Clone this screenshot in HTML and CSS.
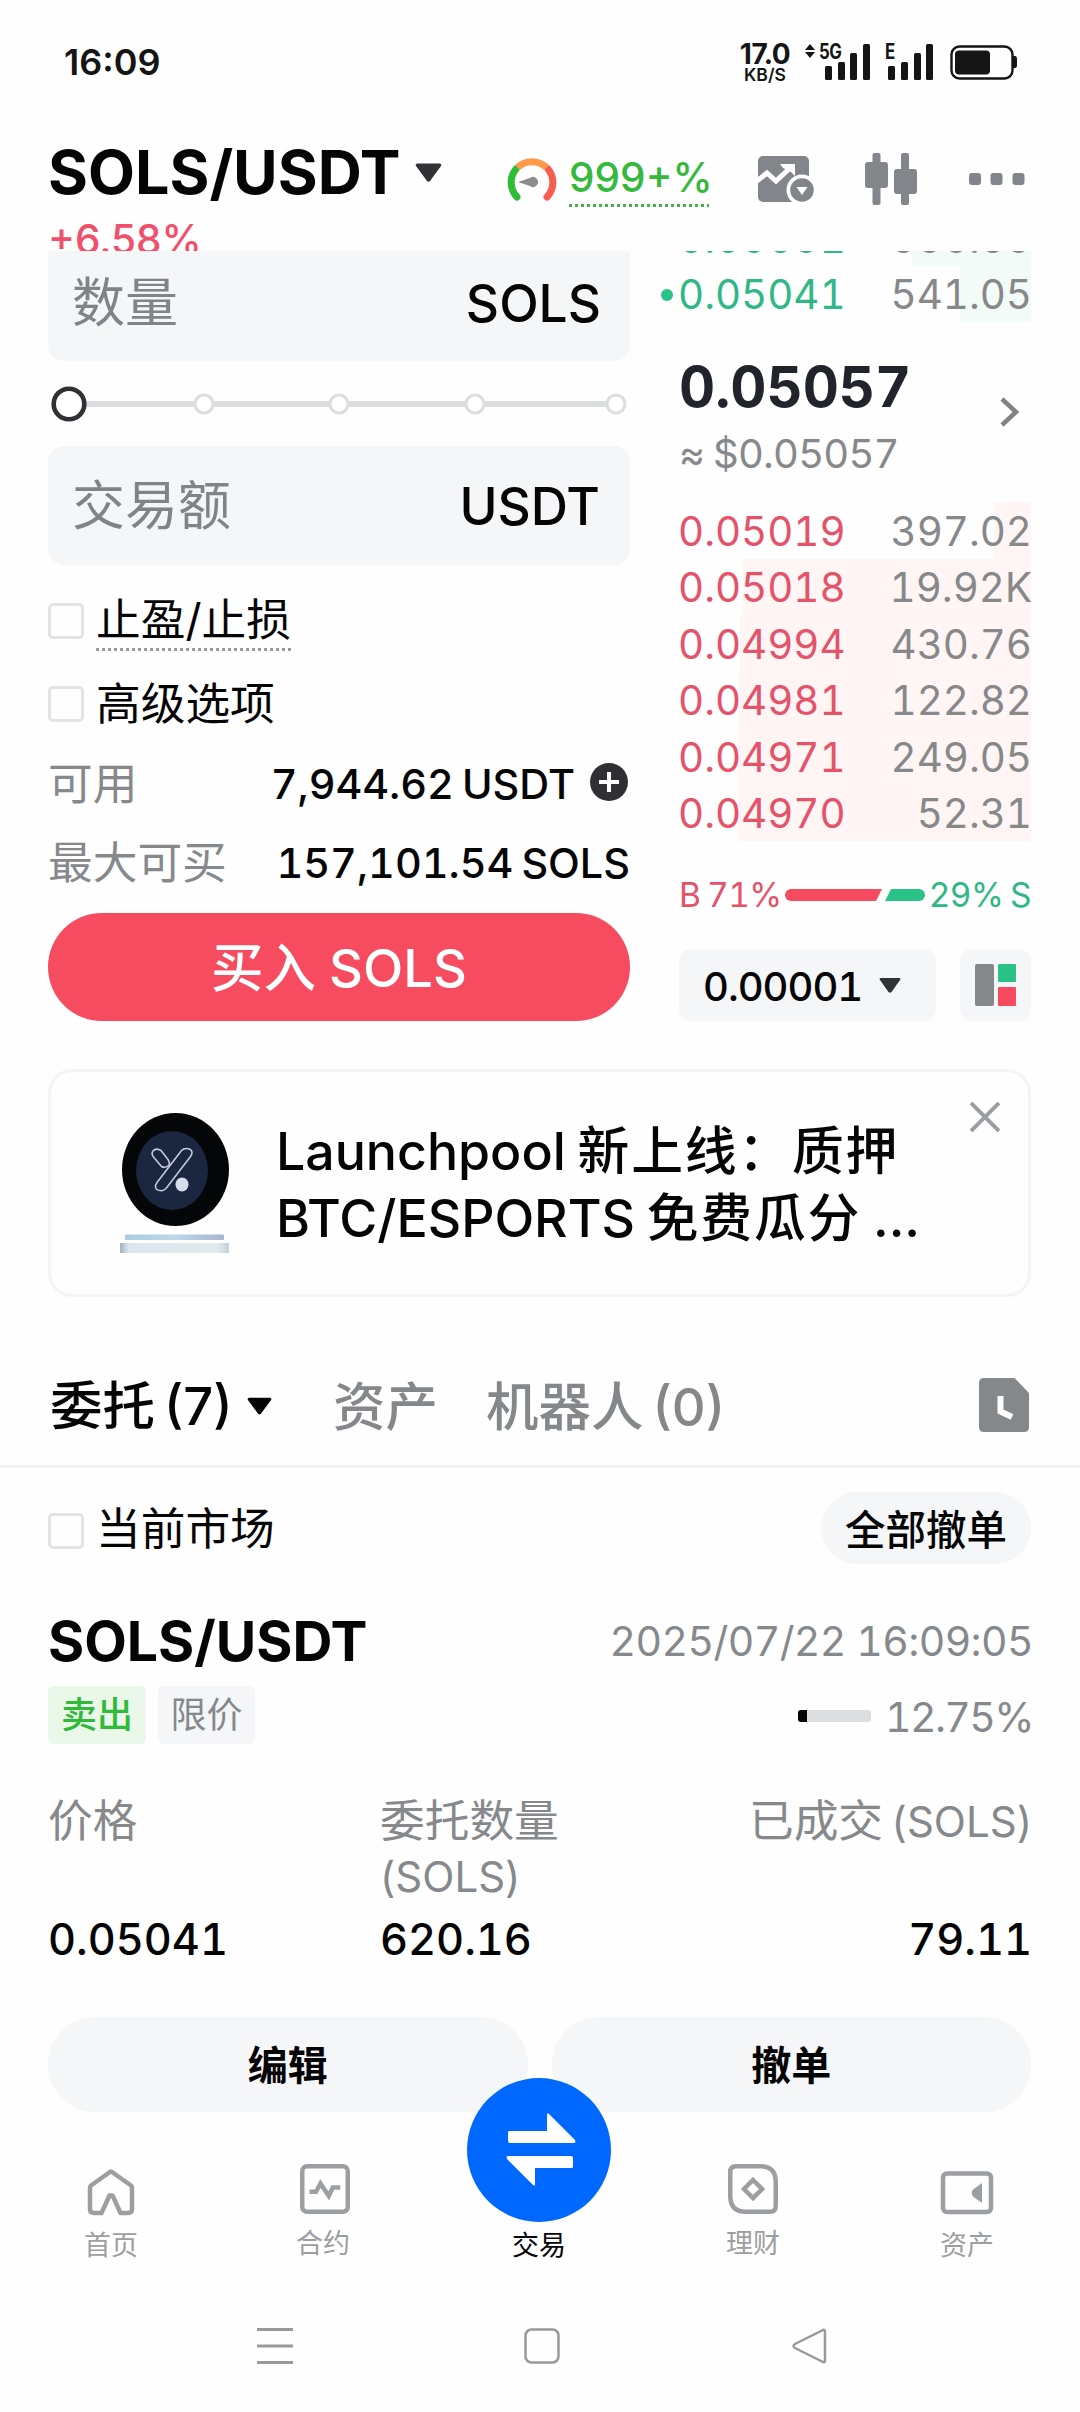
FILE: index.html
```html
<!DOCTYPE html>
<html lang="zh-CN">
<head>
<meta charset="utf-8">
<title>SOLS/USDT</title>
<link rel="stylesheet" href="styles.css">
</head>
<body>
<div class="screen">
  <header class="status">
    <span class="clock">16:09</span>
    <div class="speed"><b>17.0</b><span>KB/S</span></div>
    <div class="signal signal-a">
      <svg viewBox="0 0 68 38" width="68" height="38"><path d="M6 1l5 6H1zM6 15l5-6H1z" fill="#151515"/><g fill="#151515"><rect x="21" y="23" width="7" height="14" rx="1.5"/><rect x="34" y="19" width="7" height="18" rx="1.5"/><rect x="46" y="10" width="7" height="27" rx="1.5"/><rect x="59" y="1" width="7" height="36" rx="1.5"/></g></svg>
      <em class="net net-5g">5G</em>
    </div>
    <div class="signal signal-b">
      <svg viewBox="0 0 50 38" width="50" height="38"><g fill="#151515"><rect x="3" y="23" width="7" height="14" rx="1.5"/><rect x="16" y="19" width="7" height="18" rx="1.5"/><rect x="29" y="10" width="7" height="27" rx="1.5"/><rect x="41" y="1" width="7" height="36" rx="1.5"/></g></svg>
      <em class="net net-e">E</em>
    </div>
    <svg class="battery" viewBox="0 0 68 36" width="68" height="36"><rect x="1.5" y="2.5" width="61" height="32" rx="8" fill="none" stroke="#151515" stroke-width="2.4"/><rect x="5" y="6.500" width="35" height="24" rx="4" fill="#151515"/><path d="M63 12h2q2 0 2 3v6q0 3-2 3h-2z" fill="#151515"/></svg>
  </header>

  <div class="titlebar">
    <div class="pair">
      <div class="pair-name">SOLS/USDT<svg viewBox="0 0 27 19" width="27" height="19"><path d="M2 .5h23q2 1 1 2.500l-11 15q-1.500 1.500-3 0l-11-15q-1-1.500 1-2.500z" fill="#303236"/></svg></div>
      <div class="change">+6.58%</div>
    </div>
    <svg class="gauge" viewBox="0 0 50 46" width="50" height="46" fill="none" stroke-width="7" stroke-linecap="round"><path d="M10 41A21 21 0 0 1 9 13" stroke="#2fbd35"/><path d="M40 41A21 21 0 0 0 41 13" stroke="#f65d4e"/><path d="M10.500 11.500A21 21 0 0 1 39.500 11.500" stroke="#ff9a4a" stroke-linecap="butt"/><path d="M11 26l12-4a5 5 0 1 1 0 8z" fill="#8a8c8e"/></svg>
    <span class="apr">999+%</span>
    <svg class="ic-chart" viewBox="0 0 58 48" width="58" height="48"><rect x="1" y="1" width="51" height="46" rx="5" fill="#82868a"/><path d="M0 26l10-8 9 8 14-13" fill="none" stroke="#fff" stroke-width="5"/><path d="M23 9h15v12l-4-4-8-4z" fill="#fff"/><circle cx="45" cy="35" r="15.500" fill="#fefefe"/><circle cx="45" cy="35" r="11.800" fill="#82868a"/><path d="M39.500 32h11l-5.500 8z" fill="#fff"/></svg>
    <svg class="ic-candle" viewBox="0 0 54 54" width="54" height="54" fill="#82868a"><rect x="1" y="10" width="23" height="26" rx="3"/><rect x="8.500" y="1" width="8" height="52" rx="2"/><rect x="30" y="17" width="23" height="25" rx="3"/><rect x="37" y="1" width="8" height="52" rx="2"/></svg>
    <svg class="ic-more" viewBox="0 0 56 12" width="56" height="12" fill="#82868a"><rect width="12" height="12" rx="3"/><rect x="21.500" width="12" height="12" rx="3"/><rect x="43.500" width="12" height="12" rx="3"/></svg>
  </div>

  <main class="content">
    <div class="trade">
      <section class="form">
        <div class="field field-qty"><span>数量</span><b>SOLS</b></div>
        <svg class="slider" viewBox="0 0 582 85" width="582" height="85" fill="#fff"><path d="M38 43h524" stroke="#dcddde" stroke-width="6"/><circle cx="21" cy="43" r="15.300" stroke="#303134" stroke-width="4.600"/><g stroke="#dcddde" stroke-width="3"><circle cx="156" cy="43" r="9"/><circle cx="291" cy="43" r="9"/><circle cx="427" cy="43" r="9"/><circle cx="568" cy="43" r="9"/></g></svg>
        <div class="field field-amt"><span>交易额</span><b>USDT</b></div>
        <label class="check check-tp"><i class="box"></i><span class="dotted">止盈/止损</span></label>
        <label class="check check-adv"><i class="box"></i><span>高级选项</span></label>
        <div class="kv kv-avail"><span>可用</span><b>7,944.62 USDT</b><svg viewBox="0 0 38 38" width="38" height="38"><circle cx="19" cy="19" r="19" fill="#2e3034"/><path d="M19 9v20M9 19h20" stroke="#fff" stroke-width="4"/></svg></div>
        <div class="kv kv-max"><span>最大可买</span><b>157,101.54 SOLS</b></div>
        <button class="buy">买入 SOLS</button>
      </section>

      <section class="book">
        <div class="row bid"><i class="depth" style="width:119px"></i><span>0.05051</span><em>556.05</em></div>
        <div class="row bid mine"><i class="depth" style="width:71px"></i><span>0.05041</span><em>541.05</em></div>
        <div class="last">
          <div><strong>0.05057</strong><small>≈ $0.05057</small></div>
          <svg viewBox="0 0 20 30" width="20" height="30"><path d="M2 2l14 13L2 28" fill="none" stroke="#808386" stroke-width="4.500"/></svg>
        </div>
        <div class="row ask"><i class="depth" style="width:37px"></i><span>0.05019</span><em>397.02</em></div>
        <div class="row ask"><i class="depth" style="width:288px"></i><span>0.05018</span><em>19.92K</em></div>
        <div class="row ask"><i class="depth" style="width:291px"></i><span>0.04994</span><em>430.76</em></div>
        <div class="row ask"><i class="depth" style="width:292px"></i><span>0.04981</span><em>122.82</em></div>
        <div class="row ask"><i class="depth" style="width:293px"></i><span>0.04971</span><em>249.05</em></div>
        <div class="row ask"><i class="depth" style="width:293px"></i><span>0.04970</span><em>52.31</em></div>
        <div class="ratio"><span class="b">B 71%</span><svg viewBox="0 0 140 12" width="140" height="12"><path d="M6 0h91l-6 12H6A6 6 0 0 1 6 0z" fill="#f64b5e"/><path d="M106 0h28a6 6 0 0 1 0 12h-34z" fill="#2bc288"/></svg><span class="s">29% S</span></div>
        <div class="tools">
          <div class="step"><span>0.00001</span><svg viewBox="0 0 22 15" width="22" height="15"><path d="M1.500 0h19q1.500 1 .5 2l-8.500 12q-1.500 1.500-3 0L1 2Q0 1 1.500 0z" fill="#303236"/></svg></div>
          <div class="layout"><svg viewBox="0 0 41 42" width="41" height="42"><rect width="19" height="42" rx="2" fill="#84888b"/><rect x="23" width="18" height="18" rx="1" fill="#2bc288"/><rect x="23" y="23" width="18" height="19" rx="1" fill="#f64b5e"/></svg></div>
        </div>
      </section>
    </div>

    <section class="promo">
      <svg class="coin" viewBox="0 0 112 144" width="112" height="144">
        <defs><linearGradient id="g" x1="0" y1="0" x2="1" y2="0"><stop offset="0" stop-color="#a9cbe2"/><stop offset=".5" stop-color="#bdd9ea"/><stop offset="1" stop-color="#a6b4d2"/></linearGradient><linearGradient id="h" x1="0" y1="0" x2="1" y2="0"><stop offset="0" stop-color="#9eb0bf"/><stop offset=".08" stop-color="#dbe7ee"/><stop offset=".9" stop-color="#e0eaee"/><stop offset="1" stop-color="#c3ced6"/></linearGradient></defs>
        <ellipse cx="57.500" cy="59.500" rx="53.500" ry="56.500" fill="#050608"/><ellipse cx="54" cy="60.500" rx="36" ry="39.500" fill="#1b2640"/>
        <g fill="none" stroke="#c7cedd" stroke-width="1.500" stroke-linejoin="round"><path d="M63.500 40.500q2-2 5-2 4.500 0 5.500 3.500.3 2-1.500 4.500L48 78.500q-2 2.200-4.500 2.200-5.500 0-6-3.700-.3-2 1.500-4.500z"/><path d="M35 41q3-3.500 8-.5l7 9q2.500 4 .5 6-3.500 3-7 1l-8-9.500q-2.500-3-.5-6z"/></g><ellipse cx="64" cy="74.500" rx="6.500" ry="7" fill="#d5ddea"/>
        <rect x="7" y="124.500" width="99" height="5.500" rx="1" fill="url(#g)"/><rect x="2" y="133" width="109" height="10" fill="url(#h)"/>
      </svg>
      <p>Launchpool <span class="cjk">新上线：质押</span><br>BTC/ESPORTS <span class="cjk">免费瓜分</span> ...</p>
      <svg class="close" viewBox="0 0 30 30" width="30" height="30"><path d="M1 1l28 28M29 1L1 29" stroke="#9b9ea0" stroke-width="4"/></svg>
    </section>

    <nav class="tabs">
      <span class="tab-on">委托 (7)<svg viewBox="0 0 27 19" width="25" height="18"><path d="M2 .5h23q2 1 1 2.500l-11 15q-1.500 1.500-3 0l-11-15q-1-1.500 1-2.500z" fill="#050505"/></svg></span>
      <span class="tab-assets">资产</span>
      <span class="tab-bots">机器人 (0)</span>
      <svg class="history" viewBox="0 0 50 54" width="50" height="54"><path d="M5 0h29.500q1 0 2 1L49 14q1 1 1 2v33q0 5-5 5H5q-5 0-5-5V5q0-5 5-5z" fill="#84888b"/><path d="M21.500 18v15.500l11.500 5.500" fill="none" stroke="#fff" stroke-width="6"/></svg>
    </nav>

    <div class="filter">
      <label class="check"><i class="box"></i><span>当前市场</span></label>
      <button class="cancel-all">全部撤单</button>
    </div>

    <article class="order">
      <div class="order-top"><h2>SOLS/USDT</h2><time>2025/07/22 16:09:05</time></div>
      <div class="order-tags"><span class="tag sell">卖出</span><span class="tag limit">限价</span><i class="bar"><i style="width:12.75%"></i></i><em>12.75%</em></div>
      <div class="order-grid">
        <span>价格</span><span>委托数量<br><small>(SOLS)</small></span><span class="end">已成交 <small>(SOLS)</small></span>
        <b>0.05041</b><b>620.16</b><b class="end">79.11</b>
      </div>
      <div class="order-actions"><button>编辑</button><button>撤单</button></div>
    </article>
  </main>

  <footer class="nav">
    <a class="n1"><svg viewBox="0 0 50 50" width="50" height="50" fill="none" stroke="#9c9fa1" stroke-width="4.500" stroke-linejoin="round"><path d="M4 21.500q0-1 1-2L24 6q1-.7 2 0l19 13.500q1 1 1 2V43q0 4-4 4h-7.500L26.500 29.500h-3L15.500 47H8q-4 0-4-4z"/></svg><span>首页</span></a>
    <a class="n2"><svg viewBox="0 0 50 50" width="50" height="50" fill="none" stroke="#9c9fa1" stroke-width="4.500"><rect x="2.250" y="2.250" width="45.500" height="45.500" rx="5"/><path d="M9.500 27.800h6.500l4.500-8.300 8.300 12.500 4-8.500h7.500"/></svg><span>合约</span></a>
    <a class="n3"><svg viewBox="0 0 144 144" width="144" height="144"><circle cx="72" cy="72" r="72" fill="#0068ff"/><path d="M42 53h38V37q0-3 2-1l26 26q1 3-1 3H43q-2 0-2-2v-8q0-2 1-2z" fill="#fff"/><path d="M105 90H68v16q0 3-2 1L40 81q-1-3 1-3h63q2 0 2 2v8q0 2-1 2z" fill="#fff"/></svg><span>交易</span></a>
    <a class="n4"><svg viewBox="0 0 50 50" width="50" height="50" fill="none" stroke="#9c9fa1" stroke-width="4.500"><path d="M8 2.250h24Q47.750 2.250 47.750 18v24q0 5.750-5.750 5.750H18Q2.250 47.750 2.250 32V8q0-5.750 5.750-5.750z"/><path d="M25 16l9 9-9 9-9-9z"/></svg><span>理财</span></a>
    <a class="n5"><svg viewBox="0 0 54 50" width="54" height="50" fill="none" stroke="#9c9fa1" stroke-width="4.500"><rect x="3" y="7.500" width="48" height="38.500" rx="4"/><path d="M42 17v20l-9-6.500q-2.500-3.500 0-7z" fill="#9c9fa1" stroke="none"/></svg><span>资产</span></a>
  </footer>
  <div class="system">
    <svg viewBox="0 0 36 38" width="36" height="38"><path d="M0 2.500h36M0 19h36M0 35.500h36" stroke="#999" stroke-width="3"/></svg>
    <svg viewBox="0 0 36 38" width="36" height="38"><rect x="1.500" y="2.500" width="33" height="33" rx="6" fill="none" stroke="#999" stroke-width="2.500"/></svg>
    <svg viewBox="0 0 36 38" width="36" height="38"><path d="M31 3.500q3-2 3 1.500v28q0 3.500-3 1.500L4 21q-3-2 0-4z" fill="none" stroke="#999" stroke-width="2.500"/></svg>
  </div>
</div>
</body>
</html>
```
FILE: styles.css
```css
* { box-sizing: border-box; }
body { margin: 0; background: #fefefe; color: #050505; font-family: Inter, "Noto Sans CJK SC", sans-serif; }
b, em, i, strong, small { font-style: normal; }
button { border: 0; padding: 0; font: inherit; color: inherit; }
svg { display: block; flex: none; }
span, b, em, button, h2, time, strong, small { white-space: nowrap; }

.screen { width: 1080px; height: 2412px; overflow: hidden; display: flex; flex-direction: column; }

.status { height: 124px; flex: none; display: flex; align-items: flex-start; padding: 43px 62px 0 64px; color: #151515; }
.clock { font-size: 36px; font-weight: 600; line-height: 38px; flex: 1; }
.speed { width: 52px; font-weight: 600; display: flex; flex-direction: column; align-items: center; }
.speed b { font-size: 28px; font-weight: 700; line-height: 22px; letter-spacing: -.5px; }
.speed span { font-size: 17.500px; line-height: 17px; margin-top: 1px; }
.signal { position: relative; margin-left: 13px; }
.battery { margin: 1px 0 0 15px; }
.net { position: absolute; font-weight: 700; font-size: 21px; line-height: 20px; letter-spacing: -.5px; top: -1px; transform: scaleX(.8); transform-origin: 0 0; }
.net-5g { left: 15px; }
.net-e { left: 0; }

.titlebar { height: 127px; flex: none; display: flex; align-items: flex-start; padding: 0 55px 0 48px; overflow: hidden; }
.pair { width: 461px; }
.pair-name { display: flex; align-items: center; gap: 15px; font-size: 61px; font-weight: 700; line-height: 74px; margin-top: 11px; }
.change { font-size: 40.500px; font-weight: 500; line-height: 48px; margin-top: 7px; color: #f0506a; }
.gauge { margin-top: 32px; }
.apr { margin: 30px 0 0 12px; font-size: 40.500px; font-weight: 500; line-height: 48px; padding-bottom: 5px; color: #35b93c; width: 140px; background: repeating-linear-gradient(90deg, #46b04c 0 3px, transparent 3px 6px) 0 100% / 100% 3px no-repeat; }
.ic-chart { margin: 31px 0 0 48px; }
.ic-candle { margin: 28px 0 0 49px; }
.ic-more { margin: 49px 0 0 51px; }

.content { height: 1862px; flex: none; overflow: hidden; }
.trade { display: flex; gap: 49px; padding: 0 49px 0 48px; }
.form { width: 582px; }
.field { display: flex; justify-content: space-between; align-items: center; background: #f4f6f8; padding: 0 30px 0 24px; }
.field span { font-size: 53px; color: #808488; font-weight: 400; margin-top: -8px; }
.field b { font-size: 51.500px; font-weight: 500; }
.field-qty { height: 110px; padding-bottom: 7px; border-radius: 4px 4px 16px 16px; }
.field-qty b { margin-right: -1px; }
.field-amt { height: 119px; border-radius: 16px; }
.check { display: flex; align-items: center; gap: 12px; font-size: 44.700px; line-height: 66px; }
.box { width: 36px; height: 36px; border: 3px solid #e2e3e4; border-radius: 5px; flex: none; margin-top: 4px; }
.check-tp { margin-top: 22px; height: 64px; }
.dotted { height: 64px; background: repeating-linear-gradient(90deg, #999 0 3px, transparent 3px 6px) 0 100% / 100% 3px no-repeat; }
.check-adv { margin-top: 19px; height: 64px; }
.check-adv span { padding-top: 3px; }
.kv { display: flex; align-items: center; height: 60px; font-size: 44.700px; line-height: 60px; }
.kv span { flex: 1; color: #86898c; }
.kv b { font-size: 41.400px; font-weight: 500; word-spacing: -3px; font-feature-settings: "tnum"; }
.kv svg { margin: 0 2px 4px 15px; }
.kv-avail { margin-top: 20px; }
.kv-max { margin-top: 19px; }
.buy { display: block; width: 582px; height: 108px; margin-top: 20px; padding-bottom: 7px; border-radius: 54px; background: #f74b5f; color: #fff; font-size: 52.500px; font-weight: 500; word-spacing: -1px; }

.book { width: 352px; margin-top: -42px; font-feature-settings: "tnum"; }
.row { height: 56.500px; position: relative; display: flex; justify-content: space-between; align-items: center; font-size: 40.300px; line-height: 56px; }
.row span, .row em { position: relative; padding-top: 3px; }
.row span { margin-left: -1px; }
.row em { color: #86888a; margin-right: -1px; }
.depth { position: absolute; right: 0; top: 0; bottom: 0; }
.bid span { color: #2fb886; }
.bid .depth { background: #f2fbf7; }
.ask span { color: #e4536a; }
.ask .depth { background: #fff5f4; }
.mine::before { content: ""; position: absolute; left: -18px; top: 23px; width: 12px; height: 12px; border-radius: 50%; background: #2bc288; }
.last { height: 180px; display: flex; justify-content: space-between; align-items: center; padding-right: 11px; }
.last div { padding-top: 12px; }
.last strong { display: block; font-size: 56px; line-height: 66px; font-weight: 700; color: #22242b; }
.last small { display: block; font-size: 40px; line-height: 56px; color: #86888a; margin-top: 6px; letter-spacing: -.8px; word-spacing: -1px; }
.ratio { margin-top: 34px; height: 40px; display: flex; justify-content: space-between; align-items: center; font-size: 33.500px; letter-spacing: -.5px; word-spacing: -2px; }
.ratio .b { color: #e4536a; }
.ratio .s { color: #2fb886; }
.tools { margin-top: 34px; display: flex; justify-content: space-between; }
.step { width: 257px; height: 72px; border-radius: 12px; background: #f4f6f8; display: flex; align-items: center; gap: 17px; padding-left: 24px; font-size: 40px; font-weight: 500; letter-spacing: -1px; }
.step span { padding-top: 2px; }
.layout { width: 71px; height: 72px; border-radius: 12px; background: #f4f6f8; display: grid; place-items: center; }

.promo { margin: 48px 49px 0 48px; height: 228px; border: 3px solid #f3f4f5; border-radius: 24px; display: flex; align-items: flex-start; position: relative; }
.coin { margin: 38px 0 0 67px; }
.promo p { margin: 46px 0 0 46px; font-size: 51.800px; line-height: 67px; font-weight: 500; white-space: nowrap; word-spacing: -2px; }
.cjk { letter-spacing: 1.800px; }
.close { position: absolute; right: 28px; top: 30px; }

.tabs { height: 171px; border-bottom: 3px solid #f0f1f2; display: flex; padding: 76px 51px 0 50px; font-size: 52.500px; font-weight: 500; line-height: 64px; color: #85888b; word-spacing: -5px; }
.tabs span { height: 64px; padding-top: 2px; }
.tab-on { color: #050505; display: flex; align-items: center; gap: 14px; width: 283px; }
.tab-assets { width: 153px; }
.tab-bots { flex: 1; }
.history { margin-top: 5px; }

.filter { height: 96px; padding: 24px 49px 0 48px; display: flex; justify-content: space-between; align-items: flex-start; }
.filter .check { margin-top: 4px; height: 66px; }
.cancel-all { width: 210px; height: 72px; border-radius: 36px; background: #f4f6f8; font-size: 40.500px; font-weight: 500; padding-bottom: 2px; }

.order { padding: 0 49px 0 48px; }
.order-top { display: flex; justify-content: space-between; align-items: center; height: 66px; margin-top: 43px; }
.order-top h2 { margin: 0; font-size: 55.300px; font-weight: 700; }
.order-top time { font-size: 41px; color: #86898c; font-feature-settings: "tnum"; letter-spacing: -.6px; margin-right: -2px; padding-top: 2px; }
.order-tags { display: flex; align-items: center; height: 58px; margin-top: 13px; }
.tag { height: 58px; width: 98px; border-radius: 6px; font-size: 36px; line-height: 58px; text-align: center; background: #eaf8ea; color: #2fba37; font-weight: 500; }
.limit { background: #f4f6f8; color: #85888b; margin-left: 12px; font-weight: 400; width: 97px; }
.bar { width: 73px; height: 12px; border-radius: 3px; background: #dddedf; overflow: hidden; margin-left: auto; margin-top: 1px; }
.bar i { display: block; height: 12px; background: #050505; }
.order-tags em { margin: 3px -2px 0 14px; font-size: 41px; letter-spacing: -1.600px; color: #86898c; font-feature-settings: "tnum"; }
.order-grid { margin-top: 50px; display: grid; grid-template-columns: 332px 1fr auto; font-size: 44.700px; line-height: 55px; color: #86898c; row-gap: 8px; }
.order-grid small { font-size: 42px; }
.order-grid .end { word-spacing: -4px; margin-right: -1px; }
.order-grid b { font-size: 43.300px; font-weight: 500; color: #050505; font-feature-settings: "tnum"; }
.end { text-align: right; }
.order-actions { margin-top: 50px; display: grid; grid-template-columns: 1fr 1fr; gap: 24px; }
.order-actions button { height: 95px; border-radius: 47px; background: #f4f6f8; font-size: 40px; font-weight: 700; padding-bottom: 3px; }

.nav { height: 166px; flex: none; display: grid; grid-template-columns: repeat(5, 214px); padding-left: 4px; }
.nav a { display: flex; flex-direction: column; align-items: center; font-size: 27px; line-height: 32px; color: #9c9fa1; }
.n1, .n5 { padding-top: 53px; }
.n2, .n4 { padding-top: 51px; }
.nav span { margin-top: 14px; }
.nav .n2 span { margin-left: -4px; }
.nav .n3 { margin-top: -35px; color: #050505; z-index: 1; }
.nav .n3 span { margin-top: 8px; }
.system { display: flex; justify-content: space-between; padding: 48px 253px 0 257px; }
```
